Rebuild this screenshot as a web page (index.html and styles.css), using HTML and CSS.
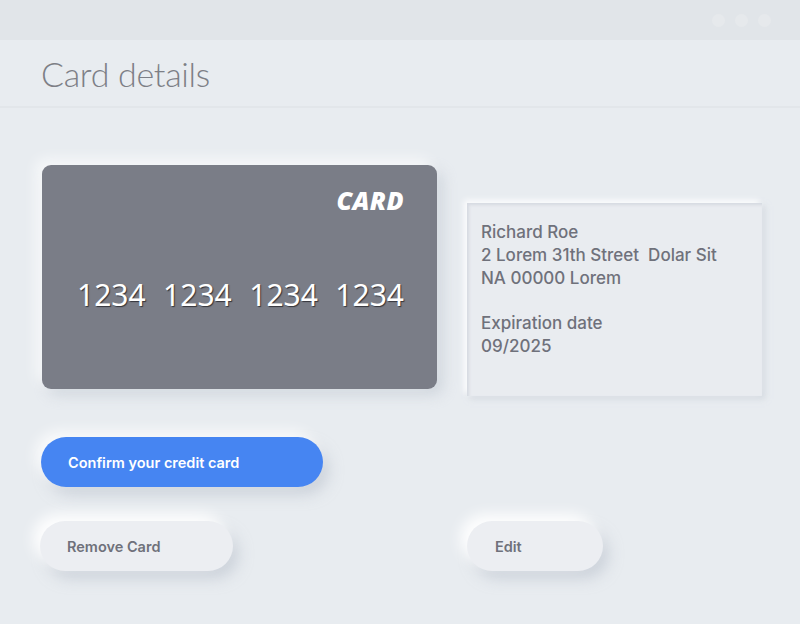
FILE: index.html
```html
<!DOCTYPE html>
<html lang="en">
  <head>
    <meta charset="UTF-8" />
    <meta name="viewport" content="width=device-width, initial-scale=1.0" />
    <title>Card details</title>
    <link rel="stylesheet" href="styles.css">
  </head>
  <body>
    <div class="topbar">
      <span class="dot"></span>
      <span class="dot"></span>
      <span class="dot"></span>
    </div>
    <header class="header">
      <h1>Card details</h1>
    </header>
    <main class="content">
      <div class="card">
        <div class="card-brand">CARD</div>
        <div class="card-number">
          <span>1234</span>
          <span>1234</span>
          <span>1234</span>
          <span>1234</span>
        </div>
      </div>
      <div class="info">
        <p>Richard Roe<br>2 Lorem 31th Street&nbsp; Dolar Sit<br>NA 00000 Lorem</p>
        <p>Expiration date<br>09/2025</p>
      </div>
      <div class="confirm-row">
        <button class="btn btn-primary">Confirm your credit card</button>
      </div>
      <div class="actions-left">
        <button class="btn btn-soft remove">Remove Card</button>
      </div>
      <div class="actions-right">
        <button class="btn btn-soft edit">Edit</button>
      </div>
    </main>
  </body>
</html>
```

FILE: styles.css
```css
body {
  margin: 0;
  background-color: #e8ecf0;
  font-family: Inter, "Noto Sans", sans-serif;
  color: #6f717b;
  height: 624px;
  overflow: hidden;
}
.topbar {
  height: 40px;
  background-color: #e1e5e9;
  display: flex;
  justify-content: flex-end;
  align-items: center;
  gap: 10px;
  padding-right: 29px;
}
.dot {
  width: 13px;
  height: 13px;
  border-radius: 50%;
  background-color: #e6e9ec;
}
.header {
  height: 66px;
  border-bottom: 2px solid #e2e6ea;
  display: flex;
  align-items: center;
  padding-left: 41px;
}
.header h1 {
  margin: 0;
  font-family: Lato, sans-serif;
  font-weight: 300;
  font-size: 34px;
  color: #7d7f86;
  letter-spacing: -0.3px;
}
.content {
  display: grid;
  grid-template-columns: 425px 1fr;
  padding-left: 42px;
  padding-top: 57px;
}
.card {
  width: 395px;
  height: 224px;
  background-color: #7a7d87;
  border-radius: 9px;
  box-shadow: -6px -6px 14px rgba(255, 255, 255, 0.7), 6px 6px 14px rgba(180, 188, 200, 0.45);
  display: flex;
  flex-direction: column;
  box-sizing: border-box;
  padding: 18px 33px 0 35px;
}
.card-brand {
  align-self: flex-end;
  font-family: "Open Sans", sans-serif;
  font-weight: 800;
  font-style: italic;
  font-size: 25px;
  color: #ffffff;
  letter-spacing: 0.4px;
}
.card-number {
  display: flex;
  justify-content: space-between;
  margin-top: 57px;
  font-family: "Noto Sans", sans-serif;
  font-size: 30px;
  color: #ffffff;
  text-shadow: 1px 1px 1px rgba(40, 40, 45, 0.85);
}
.info {
  align-self: start;
  margin-top: 38px;
  width: 295px;
  height: 193px;
  box-sizing: border-box;
  padding: 18px 14px;
  background-color: #e9ecf0;
  box-shadow: inset 2px 2px 3px rgba(205, 210, 220, 0.7), -3px -3px 6px rgba(255, 255, 255, 0.9), 3px 3px 6px rgba(200, 206, 215, 0.6);
  font-size: 17px;
  line-height: 23px;
  font-weight: 500;
}
.info p {
  margin: 0 0 22px;
}
.confirm-row {
  grid-column: 1 / span 2;
  margin-top: 41px;
}
.btn {
  border: none;
  border-radius: 26px;
  height: 50px;
  font-family: Inter, "Noto Sans", sans-serif;
  font-size: 14.5px;
  font-weight: 600;
  text-align: left;
  cursor: pointer;
}
.btn-primary {
  width: 282px;
  margin-left: -1px;
  padding-left: 27px;
  background-color: #4685f2;
  color: #ffffff;
  box-shadow: -6px -6px 14px rgba(255, 255, 255, 0.8), 6px 8px 14px rgba(180, 188, 200, 0.5);
}
.btn-soft {
  background-color: #eceef2;
  color: #6f717b;
  box-shadow: -7px -7px 14px rgba(255, 255, 255, 0.95), 6px 8px 14px rgba(180, 188, 200, 0.5);
}
.actions-left,
.actions-right {
  margin-top: 34px;
}
.remove {
  width: 193px;
  margin-left: -2px;
  padding-left: 27px;
}
.edit {
  width: 136px;
  padding-left: 28px;
}
```
